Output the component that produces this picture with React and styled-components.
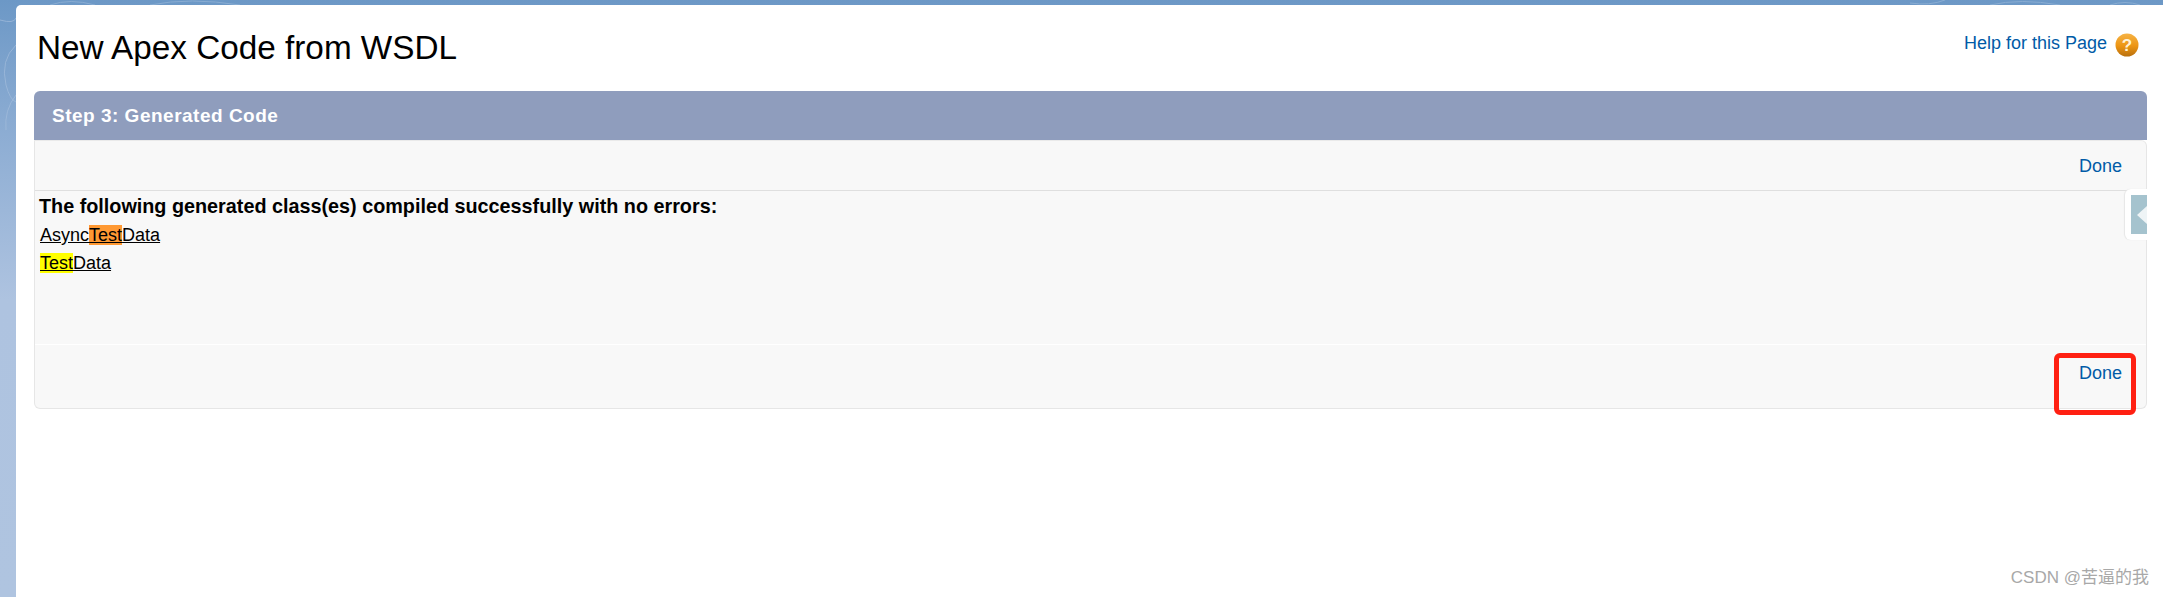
import React from "react";
import styled, { createGlobalStyle } from "styled-components";

const GlobalStyle = createGlobalStyle`
    html, body {
        margin: 0;
        height: 100%;
        overflow: hidden;
    }
    body {
        font-family: "Liberation Sans", Arial, sans-serif;
        background: linear-gradient(180deg, #6c98c6 0%, #8aabd2 120px, #aec3e0 300px, #afc4e0 100%);
    }
    #root {
        height: 100%;
    }
`;

const Page = styled.div`
    position: relative;
    box-sizing: border-box;
    height: 597px;
    padding: 5px 0 0 16px;
`;

const Swirl = styled.svg`
    position: absolute;
    left: 0;
    top: 0;
    width: 2163px;
    height: 5px;
`;

const SideSwirl = styled.svg`
    position: absolute;
    left: 0;
    top: 0;
    width: 16px;
    height: 200px;
`;

const Sheet = styled.div`
    position: relative;
    box-sizing: border-box;
    height: 100%;
    background: #fff;
    border-top-left-radius: 5px;
    padding: 0 16px 0 18px;
`;

const TitleRow = styled.div`
    display: flex;
    justify-content: space-between;
    height: 86px;
`;

const Title = styled.h1`
    margin: 23px 0 0 3px;
    font-size: 33.3px;
    line-height: 40px;
    font-weight: 400;
    color: #000;
`;

const HelpLink = styled.a`
    display: flex;
    align-items: flex-start;
    gap: 8px;
    margin: 28px 8px 0 0;
    font-size: 18px;
    line-height: 20px;
    color: #015ba7;
`;

const Block = styled.section`
    position: relative;
`;

const BlockHeader = styled.div`
    box-sizing: border-box;
    height: 49px;
    padding: 0 18px;
    display: flex;
    align-items: center;
    background: #8f9dbd;
    border-radius: 6px 6px 0 0;
    color: #fff;
    font-size: 19px;
    letter-spacing: 0.5px;
    font-weight: 700;
`;

const BlockBody = styled.div`
    box-sizing: border-box;
    height: 269px;
    background: #f8f8f8;
    border: 1px solid #e6e6e6;
    border-top: 1px solid #eaeaea;
    border-radius: 0 6px 6px 6px;
    display: flex;
    flex-direction: column;
`;

const ButtonRow = styled.div`
    box-sizing: border-box;
    display: flex;
    justify-content: flex-end;
    padding: ${(p) => (p.$bottom ? "18px" : "15px")} 24px 0 0;
    height: ${(p) => (p.$bottom ? "64px" : "50px")};
    border-bottom: ${(p) => (p.$bottom ? "none" : "1px solid #dfdfdf")};
    border-top: ${(p) => (p.$bottom ? "1px solid #fff" : "none")};
`;

const DoneLink = styled.a`
    font-size: 18px;
    line-height: 20px;
    color: #015ba7;
`;

const Results = styled.div`
    flex: 1;
    padding: 3px 0 0 4px;
`;

const Message = styled.div`
    font-size: 19.8px;
    line-height: 24px;
    font-weight: 700;
    color: #000;
    margin-bottom: 7px;
`;

const ClassLink = styled.a`
    display: table;
    margin-left: 1px;
    font-size: 18px;
    line-height: 21px;
    margin-bottom: 7px;
    color: #000;
    text-decoration: underline;
`;

const Mark = styled.span`
    background: ${(p) => p.$color};
`;

const SideTab = styled.div`
    position: absolute;
    right: 0;
    top: 98px;
    box-sizing: border-box;
    width: 22px;
    height: 51px;
    padding: 6px 0 6px 6px;
    background: #fff;
    border-radius: 6px 0 0 6px;
    box-shadow: -1px 0 1px #e6e6e6;
`;

const SideTabFace = styled.div`
    height: 100%;
    background: #a5c3ce;
    display: flex;
    align-items: center;
    justify-content: flex-end;
`;

const Callout = styled.div`
    position: absolute;
    left: 2054px;
    top: 353px;
    box-sizing: border-box;
    width: 82px;
    height: 62px;
    border: 5px solid #ff2012;
    border-radius: 6px;
`;

const Watermark = styled.div`
    position: absolute;
    right: 14px;
    bottom: 8px;
    font-family: "Liberation Sans", "Noto Sans CJK SC", sans-serif;
    font-size: 17px;
    line-height: 22px;
    color: #a8a8a8;
`;

const HelpIcon = () => (
    <svg width="24" height="24" viewBox="0 0 24 24">
        <defs>
            <linearGradient id="helpFill" x1="0" y1="0" x2="0" y2="1">
                <stop offset="0" stopColor="#f6b345" />
                <stop offset="0.55" stopColor="#ec9412" />
                <stop offset="1" stopColor="#b8700f" />
            </linearGradient>
        </defs>
        <circle cx="12" cy="12" r="11.5" fill="url(#helpFill)" />
        <text x="12" y="18" textAnchor="middle" fontFamily="Liberation Sans" fontWeight="700" fontSize="17" fill="#fff2d8">?</text>
    </svg>
);

export default function App() {
    return (
        <>
            <GlobalStyle />
            <Page>
                <Swirl viewBox="0 0 2163 5">
                    <g fill="none" stroke="#9dbbdb" strokeWidth="1" opacity="0.6">
                        <path d="M50 5 Q70 -2 95 5" />
                        <path d="M150 5 Q190 -3 240 5" />
                        <path d="M1910 3 Q1930 6 1945 0" />
                        <path d="M1990 5 Q2020 -2 2060 5" />
                        <path d="M2110 5 Q2125 0 2140 5" />
                    </g>
                </Swirl>
                <SideSwirl viewBox="0 0 16 200">
                    <g fill="none" stroke="#a4bedd" strokeWidth="1" opacity="0.7">
                        <path d="M0 20 Q14 24 16 18" />
                        <path d="M16 45 Q0 60 6 85 Q10 100 16 102" />
                        <path d="M16 95 Q4 110 6 130" />
                    </g>
                </SideSwirl>
                <Sheet>
                    <TitleRow>
                        <Title>New Apex Code from WSDL</Title>
                        <HelpLink>
                            Help for this Page
                            <HelpIcon />
                        </HelpLink>
                    </TitleRow>
                    <Block>
                        <BlockHeader>Step 3: Generated Code</BlockHeader>
                        <BlockBody>
                            <ButtonRow>
                                <DoneLink>Done</DoneLink>
                            </ButtonRow>
                            <Results>
                                <Message>The following generated class(es) compiled successfully with no errors:</Message>
                                <ClassLink>
                                    Async<Mark $color="#ff9933">Test</Mark>Data
                                </ClassLink>
                                <ClassLink>
                                    <Mark $color="#ffff00">Test</Mark>Data
                                </ClassLink>
                            </Results>
                            <ButtonRow $bottom>
                                <DoneLink>Done</DoneLink>
                            </ButtonRow>
                        </BlockBody>
                        <SideTab>
                            <SideTabFace>
                                <svg width="10" height="18" viewBox="0 0 10 18">
                                    <path d="M10 0 L0 9 L10 18 Z" fill="#eef4f6" />
                                </svg>
                            </SideTabFace>
                        </SideTab>
                    </Block>
                </Sheet>
                <Callout />
                <Watermark>CSDN @苦逼的我</Watermark>
            </Page>
        </>
    );
}
